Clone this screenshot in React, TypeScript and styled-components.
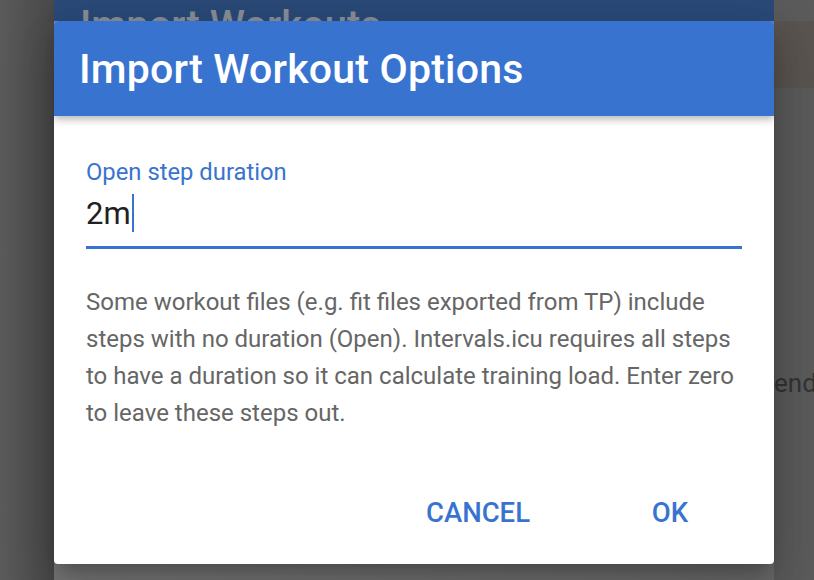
import React from "react";
import styled, { createGlobalStyle } from "styled-components";

const GlobalStyle = createGlobalStyle`
  html, body {
    margin: 0;
    padding: 0;
    background: #555555;
    font-family: Roboto, "Liberation Sans", sans-serif;
  }
`;

const Screen = styled.div`
  position: relative;
  width: 814px;
  height: 580px;
  overflow: hidden;
  display: flex;
  background: linear-gradient(90deg, #5a5a5a 0%, #4b4b4b 100%);
`;

const Gutter = styled.div`
  width: 54px;
  flex-shrink: 0;
  background: linear-gradient(90deg, #5a5a5a 0%, #494949 100%);
`;

const BehindDialog = styled.div`
  width: 720px;
  flex-shrink: 0;
  display: flex;
  flex-direction: column;
  background: linear-gradient(90deg, #7a7a7a 0%, #6c6c6c 100%);
`;

const BehindHeader = styled.div`
  height: 21px;
  background: #2b4a78;
  overflow: hidden;
  padding-left: 26px;
`;

const BehindTitle = styled.div`
  font-size: 40px;
  font-weight: 500;
  color: #8a8f99;
  line-height: 40px;
  margin-top: 6px;
  white-space: nowrap;
`;

const PageSide = styled.div`
  flex: 1;
  display: flex;
  flex-direction: column;
  background: #5b5b5b;
  overflow: hidden;
`;

const SideBand = styled.div`
  height: 67px;
  margin-top: 21px;
  background: #5a5450;
`;

const SideText = styled.div`
  margin-top: 280px;
  font-size: 26px;
  color: #333333;
  white-space: nowrap;
`;

const Dialog = styled.div`
  position: absolute;
  top: 21px;
  left: 54px;
  width: 720px;
  height: 543px;
  background: #ffffff;
  border-radius: 4px;
  overflow: hidden;
  display: flex;
  flex-direction: column;
  box-shadow: 0 11px 15px -7px rgba(0, 0, 0, 0.2),
    0 24px 38px 3px rgba(0, 0, 0, 0.14), 0 9px 46px 8px rgba(0, 0, 0, 0.12);
`;

const Header = styled.div`
  height: 95px;
  flex-shrink: 0;
  background: #3874cf;
  display: flex;
  align-items: center;
  padding: 0 25px;
  box-shadow: 0 3px 8px rgba(0, 0, 0, 0.3);
  position: relative;
  z-index: 1;
`;

const Title = styled.h2`
  margin: 0;
  font-size: 41px;
  font-weight: 500;
  color: #ffffff;
  letter-spacing: 0.2px;
`;

const Body = styled.div`
  flex: 1;
  padding: 42px 32px 0;
  display: flex;
  flex-direction: column;
`;

const Field = styled.div`
  display: flex;
  flex-direction: column;
  border-bottom: 3px solid #3874cf;
  padding-bottom: 10px;
`;

const Label = styled.label`
  font-size: 23.8px;
  line-height: 28px;
  color: #3874cf;
`;

const InputLine = styled.div`
  display: flex;
  align-items: center;
  height: 46px;
  margin-top: 4px;
  font-size: 31px;
  color: #212121;
`;

const Caret = styled.span`
  width: 2px;
  height: 38px;
  margin-left: 1px;
  background: #3874cf;
`;

const HelpText = styled.p`
  margin: 35px 0 0;
  font-size: 24px;
  line-height: 37px;
  color: #666666;
`;

const Actions = styled.div`
  display: flex;
  justify-content: flex-end;
  align-items: center;
  gap: 52px;
  padding: 0 40px 24px;
`;

const Button = styled.button`
  min-width: 128px;
  height: 56px;
  padding: 0 24px;
  border: none;
  background: transparent;
  font-family: Roboto, "Liberation Sans", sans-serif;
  font-size: 27.5px;
  font-weight: 500;
  text-transform: uppercase;
  color: #3874cf;
  cursor: pointer;
`;

export default function App() {
  return (
    <>
      <GlobalStyle />
      <Screen>
        <Gutter />
        <BehindDialog>
          <BehindHeader>
            <BehindTitle>Import Workouts</BehindTitle>
          </BehindHeader>
        </BehindDialog>
        <PageSide>
          <SideBand />
          <SideText>endar</SideText>
        </PageSide>
        <Dialog>
          <Header>
            <Title>Import Workout Options</Title>
          </Header>
          <Body>
            <Field>
              <Label>Open step duration</Label>
              <InputLine>
                2m
                <Caret />
              </InputLine>
            </Field>
            <HelpText>
              Some workout files (e.g. fit files exported from TP) include
              steps with no duration (Open). Intervals.icu requires all steps
              to have a duration so it can calculate training load. Enter zero
              to leave these steps out.
            </HelpText>
          </Body>
          <Actions>
            <Button>Cancel</Button>
            <Button>OK</Button>
          </Actions>
        </Dialog>
      </Screen>
    </>
  );
}
